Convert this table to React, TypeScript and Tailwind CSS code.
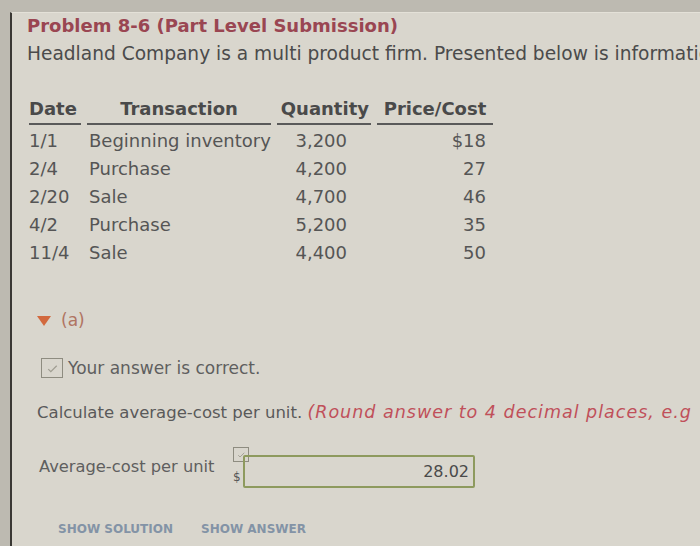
import React from "react";

const rows = [
  { date: "1/1", transaction: "Beginning inventory", quantity: "3,200", price: "$18" },
  { date: "2/4", transaction: "Purchase", quantity: "4,200", price: "27" },
  { date: "2/20", transaction: "Sale", quantity: "4,700", price: "46" },
  { date: "4/2", transaction: "Purchase", quantity: "5,200", price: "35" },
  { date: "11/4", transaction: "Sale", quantity: "4,400", price: "50" },
];

const CheckBox = ({ size }: { size: string }) => (
  <div className={`${size} border border-[#8e8c80] flex items-center justify-center`}>
    <svg viewBox="0 0 16 16" className="w-3/4 h-3/4" fill="none" stroke="#a09e92" strokeWidth="1.5">
      <path d="M3 8.5l3 3 7-7" />
    </svg>
  </div>
);

const App = () => {
  return (
    <div
      className="w-[700px] h-[546px] overflow-hidden bg-[#bdbab1] pt-[12px] pl-[10px]"
      style={{ fontFamily: '"DejaVu Sans", Verdana, sans-serif' }}
    >
      <div className="h-full bg-[#d9d6cd] border-l-2 border-[#3a3834] border-t border-t-[#e4e1d8] pl-[15px] pt-[1px] text-[#4b4b4b] whitespace-nowrap">
        <h1 className="text-[18px] font-bold text-[#9a4652] leading-[24px]">
          Problem 8-6 (Part Level Submission)
        </h1>
        <p className="text-[18.6px] leading-[24px] mt-[4px]">
          Headland Company is a multi product firm. Presented below is informatio
        </p>

        <div className="mt-[31px] ml-[2px] text-[18px]">
          <div className="grid grid-cols-[58px_190px_100px_116px] font-bold text-[#4a4a4a] leading-[24px]">
            <div className="border-b-2 border-[#5a5a5a] pb-[2px] mr-[6px]">Date</div>
            <div className="border-b-2 border-[#5a5a5a] pb-[2px] mr-[6px] text-center">Transaction</div>
            <div className="border-b-2 border-[#5a5a5a] pb-[2px] mr-[6px] text-right pr-[2px]">Quantity</div>
            <div className="border-b-2 border-[#5a5a5a] pb-[2px] text-center">Price/Cost</div>
          </div>
          <div className="pt-[2px]">
            {rows.map((r) => (
              <div key={r.date} className="grid grid-cols-[58px_190px_100px_116px] leading-[28px] text-[#555]">
                <div>{r.date}</div>
                <div className="pl-[2px]">{r.transaction}</div>
                <div className="text-right pr-[30px]">{r.quantity}</div>
                <div className="text-right pr-[7px]">{r.price}</div>
              </div>
            ))}
          </div>
        </div>

        <div className="mt-[41px] ml-[10px] flex items-center gap-[10px] text-[#b07462] text-[17px]">
          <svg viewBox="0 0 14 10" className="w-[14px] h-[10px]">
            <path d="M0 0h14L7 10z" fill="#d2693e" />
          </svg>
          <span>(a)</span>
        </div>

        <div className="mt-[22px] ml-[14px] flex items-center gap-[5px] text-[17px] text-[#5f5f5f]">
          <CheckBox size="w-[22px] h-[20px]" />
          <span>Your answer is correct.</span>
        </div>

        <p className="mt-[19px] ml-[10px] text-[16.5px] leading-[24px] text-[#5a5a5a]">
          Calculate average-cost per unit.{" "}
          <span className="italic text-[#c0505a] text-[17.5px] leading-[24px] tracking-[1px]">(Round answer to 4 decimal places, e.g</span>
        </p>

        <div className="mt-[22px] ml-[12px] flex items-start">
          <span className="text-[16.3px] text-[#5f5f5f] mt-[8px] w-[194px]">Average-cost per unit</span>
          <div className="flex flex-col">
            <CheckBox size="w-[16px] h-[15px]" />
            <span className="text-[12px] text-[#555] mt-[6px]">$</span>
          </div>
          <div className="-ml-[6px] mt-[8px] w-[232px] h-[33px] border-2 border-[#8e9a5e] rounded-[2px] flex items-center justify-end pr-[4px] text-[16px] text-[#4a4a4a]">
            28.02
          </div>
        </div>

        <div className="mt-[32px] ml-[31px] flex gap-[28px] text-[12px] font-semibold text-[#8393a6]">
          <span>SHOW SOLUTION</span>
          <span>SHOW ANSWER</span>
        </div>
      </div>
    </div>
  );
};

export default App;
